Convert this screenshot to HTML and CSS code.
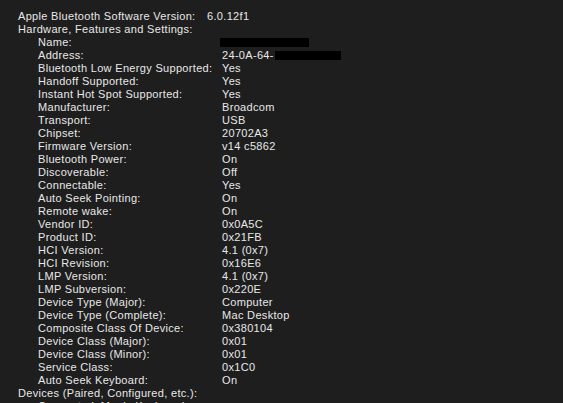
FILE: index.html
```html
<!DOCTYPE html>
<html lang="en">
<head>
<meta charset="utf-8">
<title>Bluetooth</title>
<link rel="stylesheet" href="styles.css">
</head>
<body>
<div class="report">
  <div class="top-row"><span class="k">Apple Bluetooth Software Version:</span><span class="v">6.0.12f1</span></div>
  <div class="heading">Hardware, Features and Settings:</div>
  <div class="group">
    <span class="k">Name:</span><span class="v"><span class="redact redact-name"></span></span>
    <span class="k">Address:</span><span class="v">24-0A-64-<span class="redact redact-addr"></span></span>
    <span class="k">Bluetooth Low Energy Supported:</span><span class="v">Yes</span>
    <span class="k">Handoff Supported:</span><span class="v">Yes</span>
    <span class="k">Instant Hot Spot Supported:</span><span class="v">Yes</span>
    <span class="k">Manufacturer:</span><span class="v">Broadcom</span>
    <span class="k">Transport:</span><span class="v">USB</span>
    <span class="k">Chipset:</span><span class="v">20702A3</span>
    <span class="k">Firmware Version:</span><span class="v">v14 c5862</span>
    <span class="k">Bluetooth Power:</span><span class="v">On</span>
    <span class="k">Discoverable:</span><span class="v">Off</span>
    <span class="k">Connectable:</span><span class="v">Yes</span>
    <span class="k">Auto Seek Pointing:</span><span class="v">On</span>
    <span class="k">Remote wake:</span><span class="v">On</span>
    <span class="k">Vendor ID:</span><span class="v">0x0A5C</span>
    <span class="k">Product ID:</span><span class="v">0x21FB</span>
    <span class="k">HCI Version:</span><span class="v">4.1 (0x7)</span>
    <span class="k">HCI Revision:</span><span class="v">0x16E6</span>
    <span class="k">LMP Version:</span><span class="v">4.1 (0x7)</span>
    <span class="k">LMP Subversion:</span><span class="v">0x220E</span>
    <span class="k">Device Type (Major):</span><span class="v">Computer</span>
    <span class="k">Device Type (Complete):</span><span class="v">Mac Desktop</span>
    <span class="k">Composite Class Of Device:</span><span class="v">0x380104</span>
    <span class="k">Device Class (Major):</span><span class="v">0x01</span>
    <span class="k">Device Class (Minor):</span><span class="v">0x01</span>
    <span class="k">Service Class:</span><span class="v">0x1C0</span>
    <span class="k">Auto Seek Keyboard:</span><span class="v">On</span>
  </div>
  <div class="heading">Devices (Paired, Configured, etc.):</div>
  <div class="group">
    <span class="k">Connected: Magic Keyboard</span><span class="v"></span>
  </div>
</div>
</body>
</html>
```
FILE: styles.css
```css
html, body {
  margin: 0;
  padding: 0;
  background: #1e1e1e;
}
body {
  width: 563px;
  height: 403px;
  overflow: hidden;
  font-family: "Liberation Sans", Arial, sans-serif;
  font-size: 11px;
  line-height: 13px;
  letter-spacing: 0.32px;
  color: #e8e8e8;
}
.report {
  padding: 10px 0 0 18px;
}
.top-row {
  display: grid;
  grid-template-columns: 189px auto;
}
.group {
  display: grid;
  grid-template-columns: 184px auto;
  padding-left: 20px;
}
.k, .v {
  white-space: nowrap;
}
.v {
  display: flex;
  align-items: center;
}
.redact {
  display: inline-block;
  background: #000;
  height: 9px;
}
.redact-name {
  width: 89px;
  margin-left: -2px;
}
.redact-addr {
  width: 66px;
  margin-left: 1px;
}
```
